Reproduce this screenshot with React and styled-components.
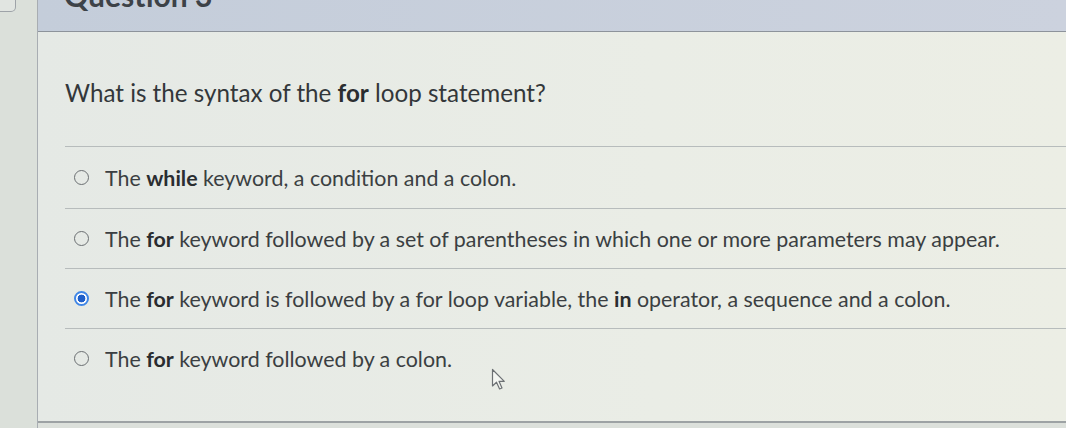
import React from 'react'
import styled, { createGlobalStyle } from 'styled-components'

const Global = createGlobalStyle`
  html, body {
    margin: 0;
    padding: 0;
    background: #dce0db;
    font-family: Lato, "Open Sans", sans-serif;
  }
`

const Page = styled.div`
  display: flex;
  width: 1066px;
  height: 428px;
  overflow: hidden;
`

const Gutter = styled.div`
  width: 37px;
  flex-shrink: 0;
  background: #dbe0da;
`

const GutterTab = styled.div`
  width: 15px;
  height: 14px;
  margin-top: -4px;
  border: 1px solid #9ea3a8;
  border-left: none;
  border-radius: 0 0 5px 0;
  background: #e1e5e1;
`

const Main = styled.div`
  flex: 1;
  display: flex;
  flex-direction: column;
  border-left: 1px solid #a8adb2;
`

const Header = styled.div`
  height: 31px;
  overflow: hidden;
  background: linear-gradient(90deg, #c4cdda, #ccd2de);
  border-bottom: 1px solid #8d939b;
  padding-left: 26px;
`

const HeaderTitle = styled.div`
  margin-top: -20px;
  font-size: 30px;
  line-height: 30px;
  font-weight: 700;
  color: #3d4248;
`

const Card = styled.div`
  position: relative;
  height: 391px;
  background: linear-gradient(90deg, #e5e9e5, #eaede6 60%, #eceee5);
  border-bottom: 2px solid #9da2a4;
  padding-left: 27px;
  box-sizing: border-box;
`

const Question = styled.div`
  padding: 46px 0 38px;
  font-size: 24.2px;
  line-height: 30px;
  color: #33373a;
`

const Strong = styled.b`
  font-weight: 700;
  color: #2a2d30;
`

const Option = styled.div`
  display: flex;
  align-items: center;
  height: ${(p) => p.$h || 60}px;
  border-top: 1px solid #b7bcbc;
  box-sizing: border-box;
  font-size: 21.4px;
  color: #3b3f42;
`

const Radio = styled.span`
  width: 15px;
  height: 15px;
  margin-left: 9px;
  margin-right: 16px;
  border-radius: 50%;
  box-sizing: border-box;
  flex-shrink: 0;
  border: ${(p) => (p.$checked ? '2px solid #3f86e6' : '1.6px solid #6b6f72')};
  background: ${(p) =>
    p.$checked ? 'radial-gradient(circle, #1f5fc9 0 3.6px, #ffffff 4.2px)' : 'transparent'};
`

const Cursor = styled.svg`
  position: absolute;
  left: 453px;
  top: 336px;
`

const options = [
  { h: 62, body: <>The <Strong>while</Strong> keyword, a condition and a colon.</> },
  { h: 60, body: <>The <Strong>for</Strong> keyword followed by a set of parentheses in which one or more parameters may appear.</> },
  { h: 60, checked: true, body: <>The <Strong>for</Strong> keyword is followed by a for loop variable, the <Strong>in</Strong> operator, a sequence and a colon.</> },
  { h: 60, body: <>The <Strong>for</Strong> keyword followed by a colon.</> },
]

export default function App() {
  return (
    <Page>
      <Global />
      <Gutter>
        <GutterTab />
      </Gutter>
      <Main>
        <Header>
          <HeaderTitle>Question 3</HeaderTitle>
        </Header>
        <Card>
          <Question>
            What is the syntax of the <Strong>for</Strong> loop statement?
          </Question>
          {options.map((o, i) => (
            <Option key={i} $h={o.h}>
              <Radio $checked={o.checked} />
              <span>{o.body}</span>
            </Option>
          ))}
          <Cursor width="16" height="24" viewBox="0 0 16 24">
            <path
              d="M1.5 1.5 L1.5 18 L5.5 14.2 L8.6 21 L11 20 L8 13.3 L13.3 13.3 Z"
              fill="#f4f6f2"
              stroke="#6d7174"
              strokeWidth="1.2"
              strokeLinejoin="round"
            />
          </Cursor>
        </Card>
      </Main>
    </Page>
  )
}
